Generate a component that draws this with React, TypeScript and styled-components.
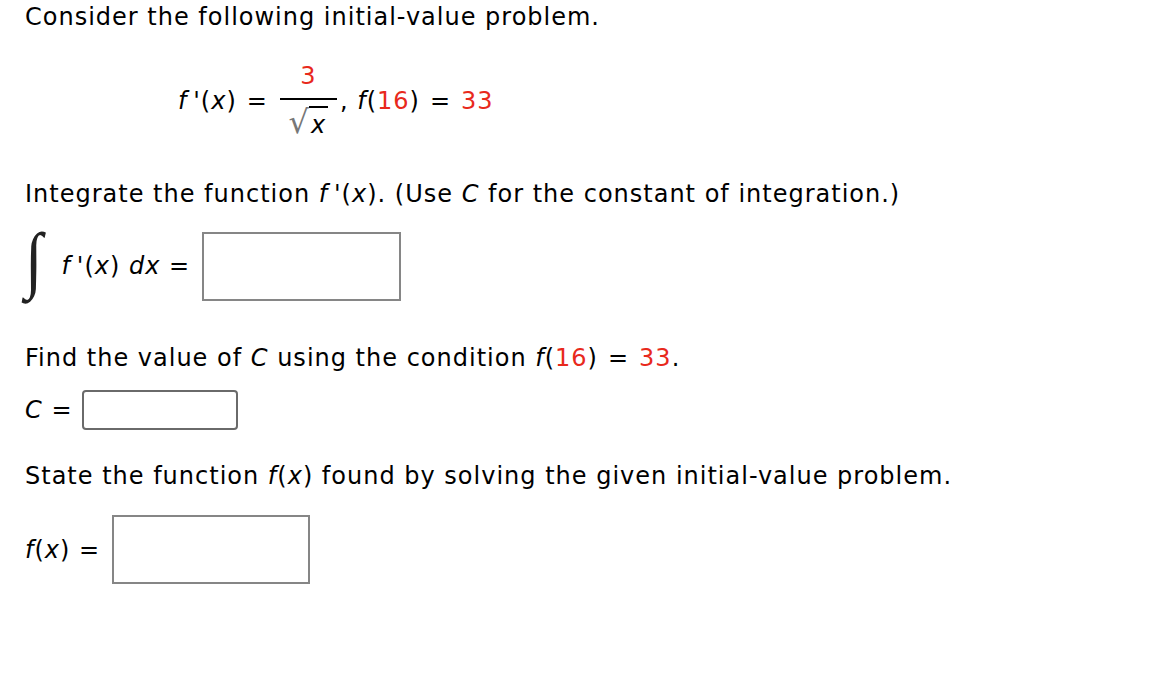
import React from 'react';
import styled, { createGlobalStyle } from 'styled-components';

const GlobalStyle = createGlobalStyle`
  html, body {
    margin: 0;
    padding: 0;
    background: #fff;
  }
  body {
    font-family: 'DejaVu Sans', Verdana, sans-serif;
    color: #000;
  }
`;

const Page = styled.div`
  padding: 0 0 0 25px;
  font-size: 24px;
  letter-spacing: 1px;
`;

const Para = styled.div<{ top?: number }>`
  line-height: 34px;
  margin-top: ${(p) => p.top || 0}px;
  white-space: nowrap;
`;

const V = styled.i`
  font-style: italic;
`;

const Red = styled.span`
  color: #e8291c;
`;

const Eq = styled.span`
  margin: 0 10px;
`;

const EqRow = styled.div`
  display: flex;
  align-items: center;
  margin: 25px 0 0 153px;
  height: 84px;
  white-space: nowrap;
`;

const Frac = styled.span`
  display: inline-flex;
  flex-direction: column;
  align-items: center;
  margin: 0 3px 0 2px;
`;

const Num = styled.span`
  line-height: 28px;
  padding: 0 0 8px;
  border-bottom: 2px solid #000;
  width: 57px;
  text-align: center;
`;

const Den = styled.span`
  display: flex;
  align-items: flex-start;
  padding-top: 4px;
  height: 36px;
`;

const Root = styled.span`
  color: #777;
  font-size: 32px;
  line-height: 36px;
  letter-spacing: 0;
`;

const Radicand = styled.span`
  border-top: 2px solid #000;
  padding: 0 2px;
  margin-top: 2px;
  line-height: 30px;
  height: 32px;
  display: flex;
  align-items: flex-end;
`;

const Row = styled.div<{ top: number }>`
  display: flex;
  align-items: center;
  margin-top: ${(p) => p.top}px;
  white-space: nowrap;
`;

const Integral = styled.span`
  font-family: 'Liberation Serif', serif;
  font-size: 64px;
  line-height: 74px;
  display: inline-block;
  transform: translateY(-6px) scaleY(1.15);
  color: #222;
  margin-right: 18px;
`;

const Box = styled.div<{ w: number; h: number; gap: number; round?: boolean }>`
  width: ${(p) => p.w}px;
  height: ${(p) => p.h}px;
  box-sizing: border-box;
  border: 2px solid ${(p) => (p.round ? '#6a6a6a' : '#868686')};
  border-radius: ${(p) => (p.round ? 4 : 0)}px;
  margin-left: ${(p) => p.gap}px;
  background: #fff;
`;

const Label = styled.span`
  line-height: 34px;
`;

export default function App() {
  return (
    <Page>
      <GlobalStyle />
      <Para>Consider the following initial-value problem.</Para>
      <EqRow>
        <V>f</V>&thinsp;'(<V>x</V>)<Eq>=</Eq>
        <Frac>
          <Num>
            <Red>3</Red>
          </Num>
          <Den>
            <Root>√</Root>
            <Radicand>
              <V>x</V>
            </Radicand>
          </Den>
        </Frac>
        , <V>&nbsp;f</V>(<Red>16</Red>)<Eq>=</Eq>
        <Red>33</Red>
      </EqRow>
      <Para top={34}>
        Integrate the function <V>f</V>&thinsp;'(<V>x</V>). (Use <V>C</V> for the constant of integration.)
      </Para>
      <Row top={18}>
        <Integral>∫</Integral>
        <Label>
          <V>f</V>&thinsp;'(<V>x</V>) <V>dx</V> =
        </Label>
        <Box w={199} h={69} gap={12} />
      </Row>
      <Para top={38}>
        Find the value of <V>C</V> using the condition <V>f</V>(<Red>16</Red>)<Eq>=</Eq>
        <Red>33</Red>.
      </Para>
      <Row top={15}>
        <Label>
          <V>C</V> =
        </Label>
        <Box w={156} h={40} gap={9} round />
      </Row>
      <Para top={29}>
        State the function <V>f</V>(<V>x</V>) found by solving the given initial-value problem.
      </Para>
      <Row top={22}>
        <Label>
          <V>f</V>(<V>x</V>) =
        </Label>
        <Box w={198} h={69} gap={12} />
      </Row>
    </Page>
  );
}
